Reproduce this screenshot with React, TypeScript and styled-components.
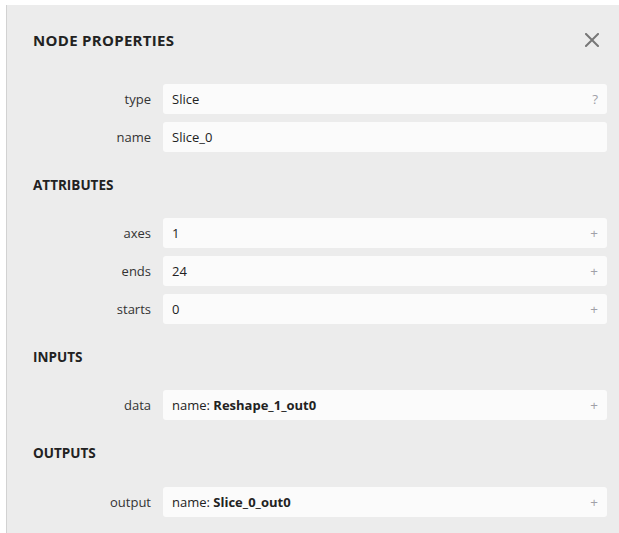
import React from "react";
import styled, { createGlobalStyle } from "styled-components";

const Global = createGlobalStyle`
  html, body { margin: 0; padding: 0; background: #ffffff; }
  body { font-family: "Open Sans", "Noto Sans", sans-serif; }
  #root { padding: 5px 0 0 6px; box-sizing: border-box; }
`;

const Panel = styled.div`
  box-sizing: border-box;
  min-height: 528px;
  background: #ececec;
  border-left: 1px solid #d2d2d2;
  color: #222;
`;

const TitleBar = styled.div`
  display: flex;
  align-items: center;
  justify-content: space-between;
  padding: 25px 20px 0 26px;
  height: 20px;
  margin-bottom: 34px;
`;

const Title = styled.div`
  font-size: 15px;
  font-weight: 700;
  line-height: 20px;
  color: #222;
  letter-spacing: 0.3px;
`;

const Close = styled.button`
  width: 14px;
  height: 14px;
  padding: 0;
  border: 0;
  background: transparent;
  display: flex;
  cursor: pointer;
`;

const Body = styled.div`
  padding: 0 12px 0 26px;
`;

const Rows = styled.div`
  display: flex;
  flex-direction: column;
  gap: 8px;
`;

const Heading = styled.div<{ $below?: number }>`
  font-size: 13.5px;
  font-weight: 700;
  line-height: 20px;
  margin: 23px 0 ${(p) => p.$below ?? 23}px;
  color: #222;
`;

const Row = styled.div`
  display: grid;
  grid-template-columns: 118px 1fr;
  column-gap: 12px;
  align-items: center;
`;

const Label = styled.div`
  text-align: right;
  font-size: 13px;
  color: #333;
  line-height: 30px;
`;

const Value = styled.div`
  height: 30px;
  box-sizing: border-box;
  background: #fbfbfb;
  border-radius: 3px;
  display: flex;
  align-items: center;
  justify-content: space-between;
  padding: 0 9px 0 9px;
  font-size: 13px;
  color: #222;
`;

const Strong = styled.b`
  font-weight: 700;
`;

const Mark = styled.span`
  font-size: 13.5px;
  color: #a0a0a8;
`;

type Item = { label: string; value: React.ReactNode; mark?: string };

const Field = ({ label, value, mark = "+" }: Item) => (
  <Row>
    <Label>{label}</Label>
    <Value>
      <span>{value}</span>
      {mark ? <Mark>{mark}</Mark> : null}
    </Value>
  </Row>
);

export default function App() {
  return (
    <>
      <Global />
      <Panel>
        <TitleBar>
          <Title>NODE PROPERTIES</Title>
          <Close aria-label="close">
            <svg width="14" height="14" viewBox="0 0 14 14">
              <path d="M1 1 L13 13 M13 1 L1 13" stroke="#777" strokeWidth="2" strokeLinecap="square" fill="none" />
            </svg>
          </Close>
        </TitleBar>
        <Body>
          <Rows>
            <Field label="type" value="Slice" mark="?" />
            <Field label="name" value="Slice_0" mark="" />
          </Rows>
          <Heading>ATTRIBUTES</Heading>
          <Rows>
            <Field label="axes" value="1" />
            <Field label="ends" value="24" />
            <Field label="starts" value="0" />
          </Rows>
          <Heading>INPUTS</Heading>
          <Rows>
            <Field label="data" value={<>name: <Strong>Reshape_1_out0</Strong></>} />
          </Rows>
          <Heading $below={24}>OUTPUTS</Heading>
          <Rows>
            <Field label="output" value={<>name: <Strong>Slice_0_out0</Strong></>} />
          </Rows>
        </Body>
      </Panel>
    </>
  );
}
